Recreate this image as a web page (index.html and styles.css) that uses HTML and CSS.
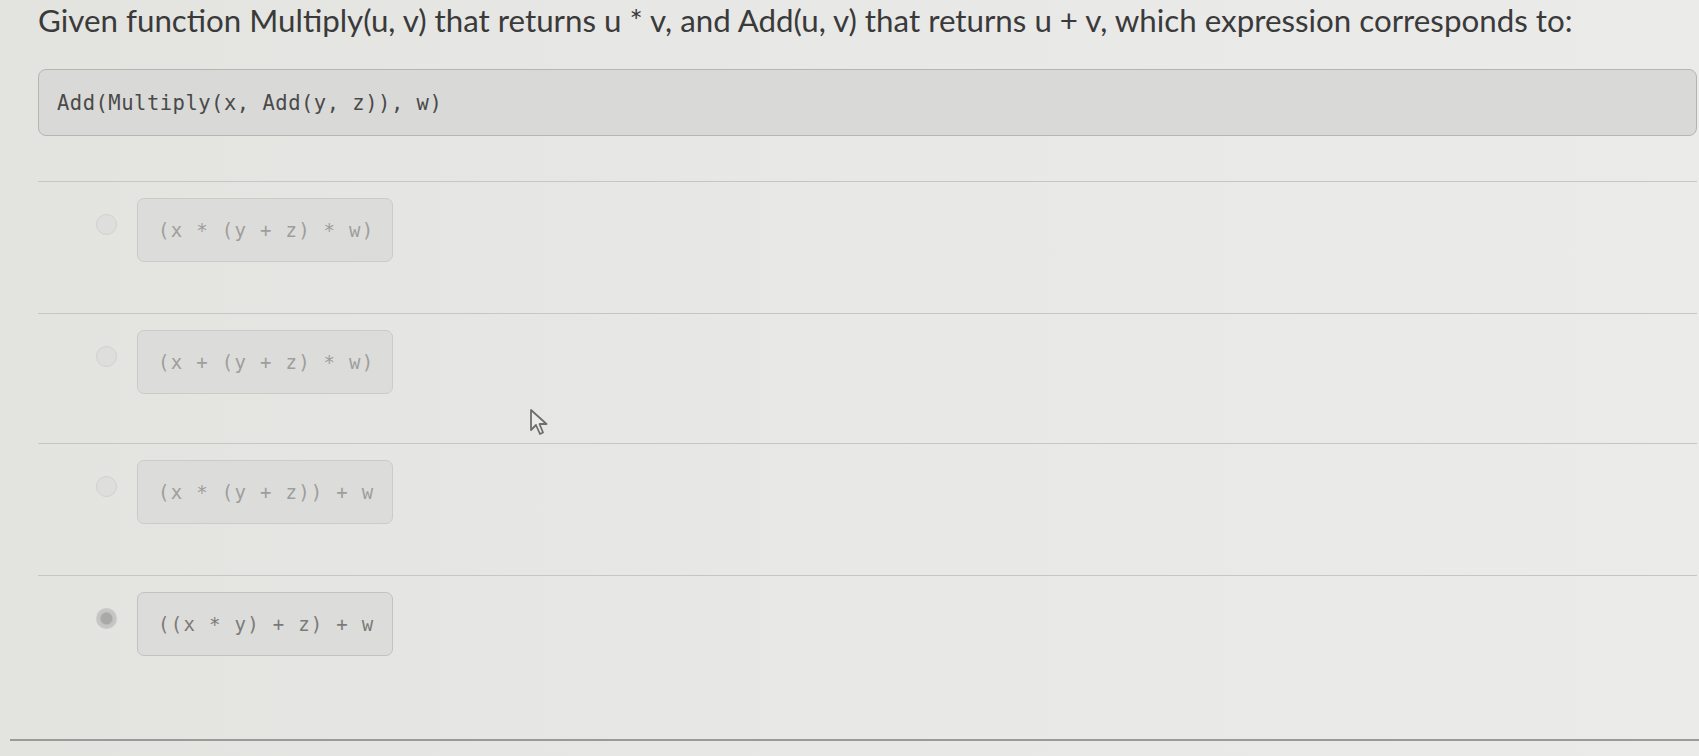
FILE: index.html
```html
<!DOCTYPE html>
<html>
<head>
<meta charset="utf-8">
<link rel="stylesheet" href="styles.css">
</head>
<body>
<div class="page">
  <h1 class="question">Given function Multiply(u, v) that returns u * v, and Add(u, v) that returns u + v, which expression corresponds to:</h1>
  <div class="code-box"><code>Add(Multiply(x, Add(y, z)), w)</code></div>
  <ul class="answers">
    <li class="answer"><span class="radio"></span><span class="choice">(x * (y + z) * w)</span></li>
    <li class="answer"><span class="radio"></span><span class="choice">(x + (y + z) * w)</span></li>
    <li class="answer"><span class="radio"></span><span class="choice">(x * (y + z)) + w</span></li>
    <li class="answer selected"><span class="radio"></span><span class="choice">((x * y) + z) + w</span></li>
  </ul>
  <div class="footer-rule"></div>
</div>
<svg class="cursor" width="22" height="30" viewBox="0 0 22 30">
  <path d="M2 2 L2 22 L7 17 L11 26 L14 24.5 L10.5 16 L17.5 16 Z" fill="#ebebea" stroke="#6e6e6e" stroke-width="1.8" stroke-linejoin="round"/>
</svg>
</body>
</html>
```
FILE: styles.css
```css
html, body {
  margin: 0;
  padding: 0;
}
body {
  background: linear-gradient(90deg, #e3e3e0 0%, #e8e8e6 50%, #ebebea 100%);
  width: 1699px;
  height: 756px;
  overflow: hidden;
  position: relative;
}
.page {
  padding-left: 38px;
  padding-right: 2px;
}
.question {
  margin: 0;
  padding-top: 1px;
  font-family: Lato, "Open Sans", sans-serif;
  font-weight: 400;
  font-size: 31.3px;
  line-height: 38px;
  color: #3a3a3a;
  white-space: nowrap;
}
.code-box {
  margin-top: 30px;
  height: 67px;
  box-sizing: border-box;
  background: #d9d9d7;
  border: 1.5px solid #b5b5b3;
  border-radius: 8px;
  display: flex;
  align-items: center;
  padding-left: 18px;
}
.code-box code {
  font-family: "DejaVu Sans Mono", "Liberation Mono", monospace;
  font-size: 20.5px;
  color: #4a4a4a;
  letter-spacing: 0.5px;
}
.answers {
  list-style: none;
  margin: 45px 0 0 0;
  padding: 0;
}
.answer {
  border-top: 1.5px solid #c6c6c4;
  height: 132px;
  box-sizing: border-box;
  padding-top: 16px;
  display: flex;
  align-items: flex-start;
}
.answer:nth-child(2) {
  height: 130px;
}
.answer:last-child {
  height: 164px;
}
.radio {
  width: 21px;
  height: 21px;
  box-sizing: border-box;
  border-radius: 50%;
  border: 1.5px solid #d0d0ce;
  background: #dededc;
  margin-left: 58px;
  margin-top: 16px;
  flex: none;
}
.selected .radio {
  border: 2px solid #c8c8c6;
  background: radial-gradient(circle, #a9a9a7 0 5.5px, #c4c4c2 6.5px);
}
.choice {
  margin-left: 20px;
  width: 256px;
  height: 64px;
  box-sizing: border-box;
  background: #dcdcda;
  border: 1.5px solid #cbcbc9;
  border-radius: 7px;
  display: flex;
  align-items: center;
  padding-left: 20px;
  font-family: "DejaVu Sans Mono", "Liberation Mono", monospace;
  font-size: 19px;
  letter-spacing: 1.3px;
  color: #9e9e9c;
  white-space: pre;
}
.selected .choice {
  color: #7a7a78;
  border-color: #c2c2c0;
}
.footer-rule {
  margin-left: -28px;
  margin-right: -2px;
  border-top: 2px solid #9a9a98;
}
.cursor {
  position: absolute;
  left: 529px;
  top: 408px;
}
```
